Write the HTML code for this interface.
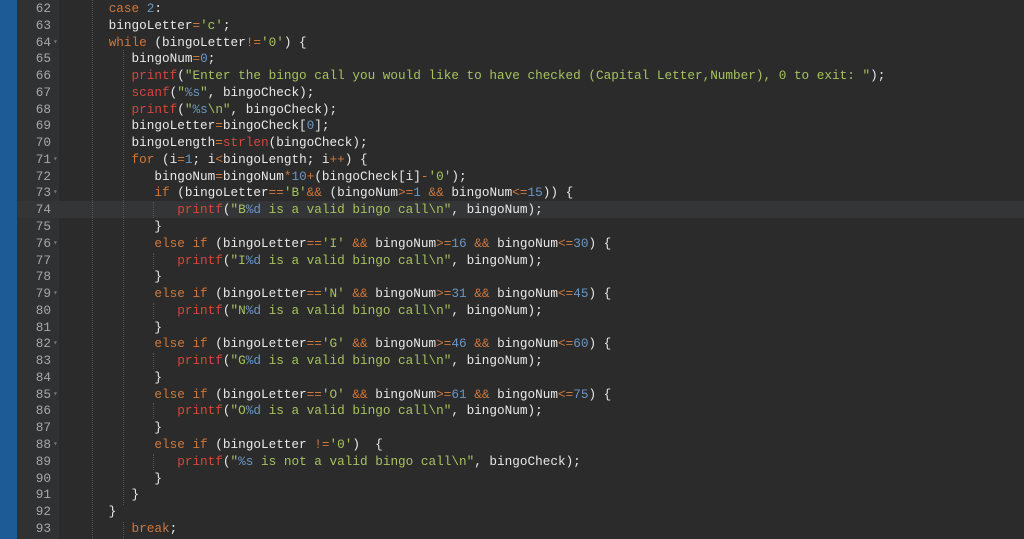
<!DOCTYPE html><html><head><style>
body{margin:0;width:1024px;height:539px;overflow:hidden;background:#2b2b2b;font-family:"Liberation Mono",monospace;font-size:12.7px;}
#blue{position:absolute;left:0;top:0;width:17px;height:539px;background:#1d5b97}
#gut{position:absolute;left:17px;top:0;width:42px;height:539px;background:#303132}
#hl{position:absolute;left:17px;top:201px;width:1007px;height:17px;background:#343536}
.l{position:absolute;left:0;height:16.77px;line-height:16.77px;white-space:pre;color:#e8e8e8}
.n{position:absolute;left:17px;width:34px;text-align:right;color:#a8a8a8}
.f{position:absolute;left:53px;color:#777;font-size:8px}
.c{position:absolute;left:63px}
.k{color:#d0773a}.s{color:#a6c25f}.p{color:#d6463c}.d{color:#6a97c6}.o{color:#d0773a}
.g{position:absolute;width:0;border-left:1px dotted #555}
</style></head><body>
<div id="blue"></div><div id="gut"></div><div id="hl"></div>
<div class="g" style="left:92px;top:0;height:539px"></div>
<div class="g" style="left:123px;top:50px;height:455px"></div>
<div class="g" style="left:123px;top:522px;height:17px"></div>
<div id="guides"></div>
<div id="code"></div>
<script>
const L=[
["62","","      <span class=k>case</span> <span class=d>2</span>:"],
["63","","      bingoLetter<span class=o>=</span><span class=s>'c'</span>;"],
["64","▾","      <span class=k>while</span> (bingoLetter<span class=o>!=</span><span class=s>'0'</span>) {"],
["65","","         bingoNum<span class=o>=</span><span class=d>0</span>;"],
["66","","         <span class=p>printf</span>(<span class=s>\"Enter the bingo call you would like to have checked (Capital Letter,Number), 0 to exit: \"</span>);"],
["67","","         <span class=p>scanf</span>(<span class=s>\"<span class=d>%s</span>\"</span>, bingoCheck);"],
["68","","         <span class=p>printf</span>(<span class=s>\"<span class=d>%s</span>\\n\"</span>, bingoCheck);"],
["69","","         bingoLetter<span class=o>=</span>bingoCheck[<span class=d>0</span>];"],
["70","","         bingoLength<span class=o>=</span><span class=p>strlen</span>(bingoCheck);"],
["71","▾","         <span class=k>for</span> (i<span class=o>=</span><span class=d>1</span>; i<span class=o>&lt;</span>bingoLength; i<span class=o>++</span>) {"],
["72","","            bingoNum<span class=o>=</span>bingoNum<span class=o>*</span><span class=d>10</span><span class=o>+</span>(bingoCheck[i]<span class=o>-</span><span class=s>'0'</span>);"],
["73","▾","            <span class=k>if</span> (bingoLetter<span class=o>==</span><span class=s>'B'</span><span class=o>&amp;&amp;</span> (bingoNum<span class=o>&gt;=</span><span class=d>1</span> <span class=o>&amp;&amp;</span> bingoNum<span class=o>&lt;=</span><span class=d>15</span>)) {"],
["74","","               <span class=p>printf</span>(<span class=s>\"B<span class=d>%d</span> is a valid bingo call\\n\"</span>, bingoNum);"],
["75","","            }"],
["76","▾","            <span class=k>else if</span> (bingoLetter<span class=o>==</span><span class=s>'I'</span> <span class=o>&amp;&amp;</span> bingoNum<span class=o>&gt;=</span><span class=d>16</span> <span class=o>&amp;&amp;</span> bingoNum<span class=o>&lt;=</span><span class=d>30</span>) {"],
["77","","               <span class=p>printf</span>(<span class=s>\"I<span class=d>%d</span> is a valid bingo call\\n\"</span>, bingoNum);"],
["78","","            }"],
["79","▾","            <span class=k>else if</span> (bingoLetter<span class=o>==</span><span class=s>'N'</span> <span class=o>&amp;&amp;</span> bingoNum<span class=o>&gt;=</span><span class=d>31</span> <span class=o>&amp;&amp;</span> bingoNum<span class=o>&lt;=</span><span class=d>45</span>) {"],
["80","","               <span class=p>printf</span>(<span class=s>\"N<span class=d>%d</span> is a valid bingo call\\n\"</span>, bingoNum);"],
["81","","            }"],
["82","▾","            <span class=k>else if</span> (bingoLetter<span class=o>==</span><span class=s>'G'</span> <span class=o>&amp;&amp;</span> bingoNum<span class=o>&gt;=</span><span class=d>46</span> <span class=o>&amp;&amp;</span> bingoNum<span class=o>&lt;=</span><span class=d>60</span>) {"],
["83","","               <span class=p>printf</span>(<span class=s>\"G<span class=d>%d</span> is a valid bingo call\\n\"</span>, bingoNum);"],
["84","","            }"],
["85","▾","            <span class=k>else if</span> (bingoLetter<span class=o>==</span><span class=s>'O'</span> <span class=o>&amp;&amp;</span> bingoNum<span class=o>&gt;=</span><span class=d>61</span> <span class=o>&amp;&amp;</span> bingoNum<span class=o>&lt;=</span><span class=d>75</span>) {"],
["86","","               <span class=p>printf</span>(<span class=s>\"O<span class=d>%d</span> is a valid bingo call\\n\"</span>, bingoNum);"],
["87","","            }"],
["88","▾","            <span class=k>else if</span> (bingoLetter <span class=o>!=</span><span class=s>'0'</span>)  {"],
["89","","               <span class=p>printf</span>(<span class=s>\"<span class=d>%s</span> is not a valid bingo call\\n\"</span>, bingoCheck);"],
["90","","            }"],
["91","","         }"],
["92","","      }"],
["93","","         <span class=k>break</span>;"]];
let h="";L.forEach((r,i)=>{h+=`<div class="l" style="top:${1+i*16.77}px;width:1024px"><span class="n">${r[0]}</span><span class="f">${r[1]}</span><span class="c">${r[2]}</span></div>`});
document.getElementById("code").innerHTML=h;
let g="";[74,77,80,83,86,89].forEach(n=>{g+=`<div class="g" style="left:153px;top:${1+(n-62)*16.77}px;height:16px"></div>`});
document.getElementById("guides").innerHTML=g;
</script>
</body></html>
